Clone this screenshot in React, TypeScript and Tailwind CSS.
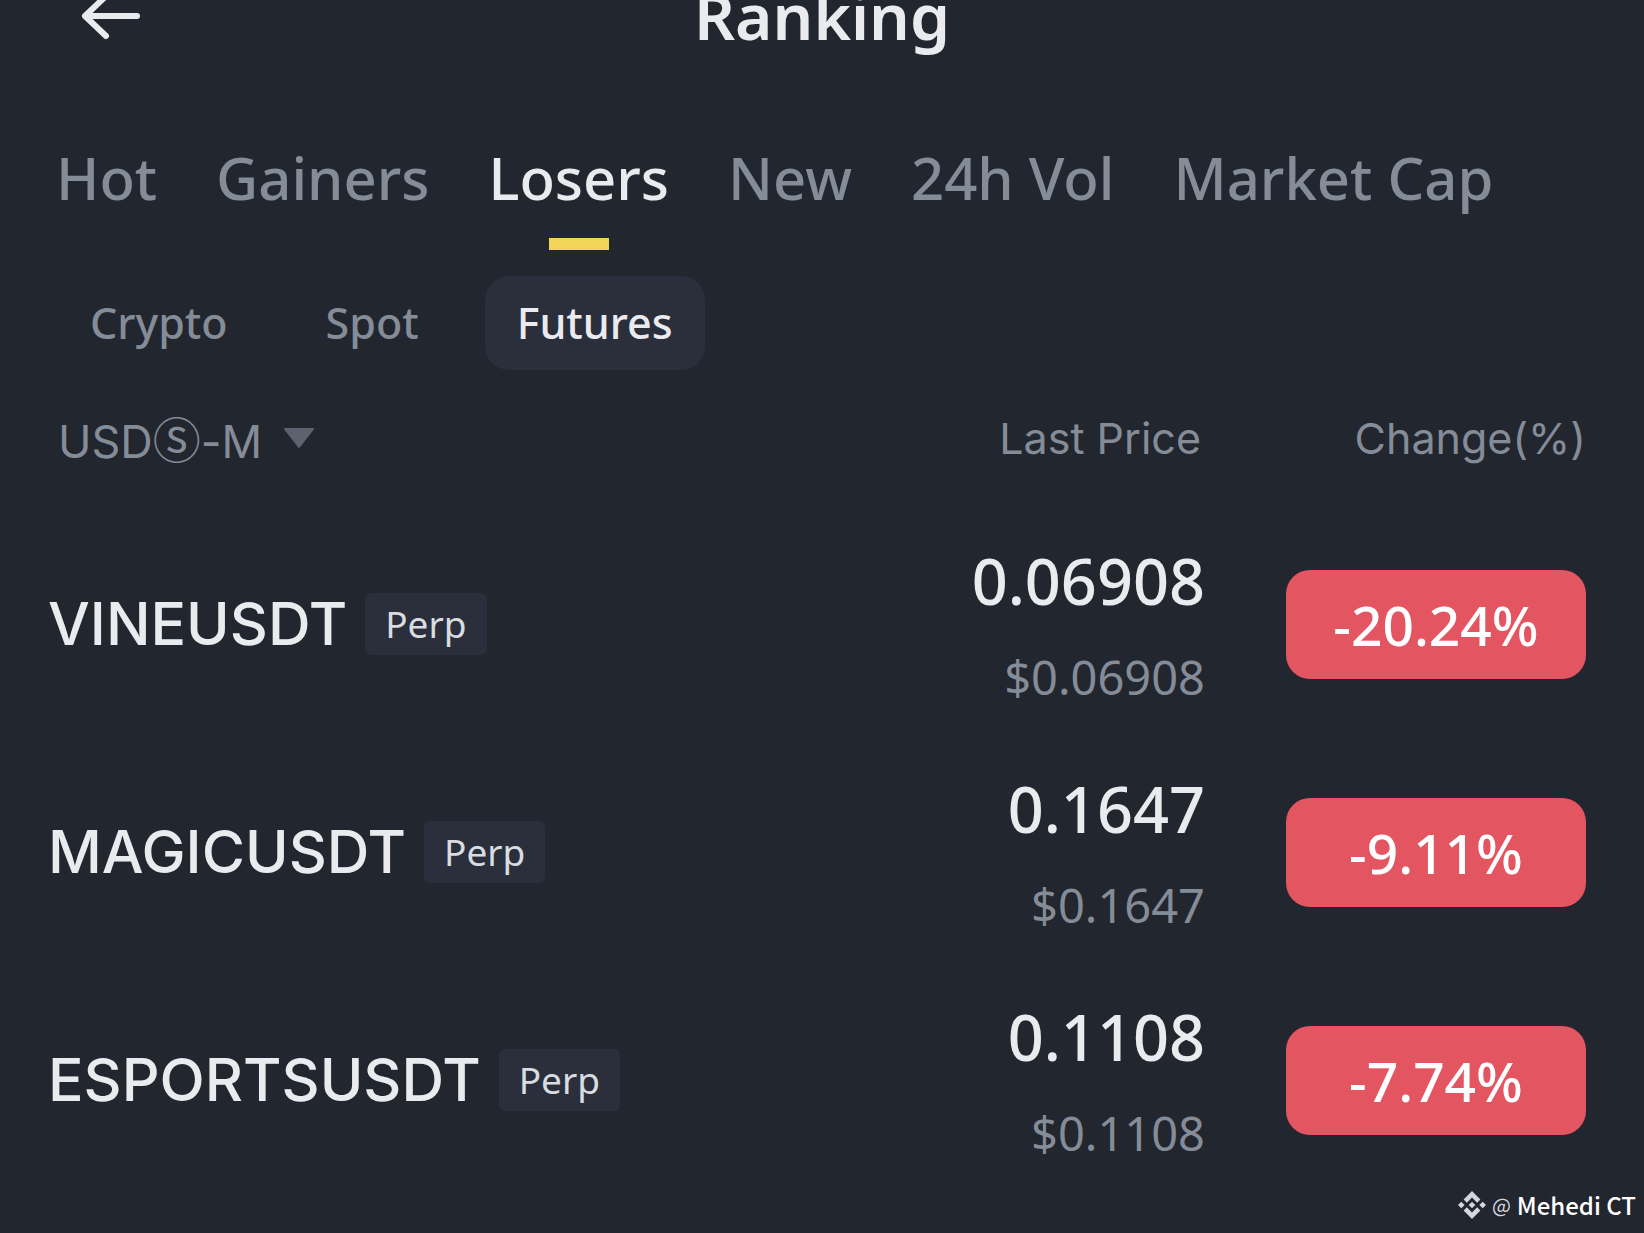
import { useState } from "react";

const tabs = ["Hot", "Gainers", "Losers", "New", "24h Vol", "Market Cap"];
const markets = ["Crypto", "Spot", "Futures"];

type Pair = { symbol: string; price: string; change: string };

const pairs: Pair[] = [
  { symbol: "VINEUSDT", price: "0.06908", change: "-20.24%" },
  { symbol: "MAGICUSDT", price: "0.1647", change: "-9.11%" },
  { symbol: "ESPORTSUSDT", price: "0.1108", change: "-7.74%" },
];

function BackArrow() {
  return (
    <svg viewBox="0 0 60 48" className="h-12 w-15" fill="none" stroke="currentColor" strokeWidth="6" strokeLinecap="round" strokeLinejoin="round" aria-hidden="true">
      <path d="M57 24H5M26 4L5 24l21 20" />
    </svg>
  );
}

function Caret() {
  return (
    <svg viewBox="0 0 30 20" className="h-5 w-[30px] text-[#5d636e]" fill="currentColor" stroke="currentColor" strokeWidth="2" strokeLinejoin="round" aria-hidden="true">
      <path d="M1 1h28L15 19z" />
    </svg>
  );
}

function Diamonds() {
  return (
    <svg viewBox="0 0 28 28" className="size-7 text-[#d5d7dc]" fill="currentColor" aria-hidden="true">
      <path d="M14 0l8.400 8.400-3.300 3.300L14 6.600l-5.100 5.100-3.300-3.300z" />
      <path d="M14 28l8.400-8.400-3.300-3.300L14 21.400l-5.100-5.100-3.300 3.300z" />
      <path d="M14 10.700l3.300 3.300-3.300 3.300-3.300-3.300z" />
      <path d="M3.300 10.700L6.600 14l-3.300 3.300L0 14z" />
      <path d="M24.700 10.700L28 14l-3.300 3.300-3.300-3.300z" />
    </svg>
  );
}

function PairRow({ symbol, price, change }: Pair) {
  return (
    <tr className="h-[228px]">
      <td className="align-middle">
        <div className="flex items-center gap-[18px]">
          <span className="text-[59px] leading-16 font-medium text-[#eaebef]">{symbol}</span>
          <span className="rounded-md bg-[#2a2f3b] px-5 font-['Noto_Sans',sans-serif] text-[37px] leading-[62px] text-[#d9dce1]">Perp</span>
        </div>
      </td>
      <td className="pt-[39px] text-right align-top font-['Noto_Sans',sans-serif]">
        <div className="text-[63px] leading-16 font-medium text-[#eaebef]">{price}</div>
        <div className="mt-9 text-[47px] leading-14">${price}</div>
      </td>
      <td className="align-middle">
        <div className="ml-auto w-[300px] rounded-3xl bg-[#e35561] text-center font-['Noto_Sans',sans-serif] text-[55px] leading-[109px] font-medium text-white">
          {change}
        </div>
      </td>
    </tr>
  );
}

export default function App() {
  const [tab, setTab] = useState("Losers");
  const [market, setMarket] = useState("Futures");

  return (
    <div className="relative min-h-screen overflow-hidden bg-[#22262f] font-['Inter','Noto_Sans_CJK_SC',sans-serif] text-[#848c97]">
      <header className="grid h-8 grid-cols-[1fr_auto_1fr] grid-rows-[32px] items-center px-20 text-[#eaebef]">
        <button type="button" aria-label="Back" className="justify-self-start">
          <BackArrow />
        </button>
        <h1 className="font-['Noto_Sans',sans-serif] text-[64px] leading-8 font-semibold">Ranking</h1>
      </header>

      <nav aria-label="Ranking lists" className="mt-[114px] flex gap-[59px] pl-14 font-['Noto_Sans',sans-serif] text-[58px] font-medium">
        {tabs.map((name) => (
          <button key={name} type="button" onClick={() => setTab(name)} className="flex flex-col items-center gap-7 whitespace-nowrap">
            <span className={name === tab ? "leading-16 text-[#eaebef]" : "leading-16"}>{name}</span>
            {name === tab && <span className="h-3 w-15 bg-[#f3d45b]" />}
          </button>
        ))}
      </nav>

      <div className="mt-[26px] flex gap-[34px] pl-[58px] font-['Noto_Sans',sans-serif] text-[43px] font-medium">
        {markets.map((name) => (
          <button
            key={name}
            type="button"
            aria-pressed={name === market}
            onClick={() => setMarket(name)}
            className={name === market ? "rounded-3xl bg-[#2a2f3b] px-8 leading-[94px] text-[#eaebef]" : "rounded-3xl px-8 leading-[94px]"}
          >
            {name}
          </button>
        ))}
      </div>

      <div className="pr-[58px] pl-12">
        <table className="w-full">
          <thead>
            <tr className="text-[43px] leading-12">
              <th className="pt-11 pb-12 pl-[10px] text-left font-normal">
                <button type="button" aria-haspopup="listbox" className="flex h-12 items-center gap-[22px] text-[45px]">
                  <span className="leading-11 [font-feature-settings:'calt'_0]">
                    USD<span className="font-['Noto_Sans_CJK_SC',sans-serif] text-[48px] leading-none">Ⓢ</span>-M
                  </span>
                  <Caret />
                </button>
              </th>
              <th className="w-[300px] pt-11 pr-1 pb-12 text-right font-normal">Last Price</th>
              <th className="w-[381px] pt-11 pb-12 text-right font-normal">Change(%)</th>
            </tr>
          </thead>
          <tbody>
            {pairs.map((pair) => (
              <PairRow key={pair.symbol} {...pair} />
            ))}
          </tbody>
        </table>
      </div>

      <div className="absolute right-2 bottom-1 flex items-center gap-1.5 font-['Noto_Sans_CJK_SC',sans-serif] text-[24px] leading-12 text-white">
        <Diamonds />
        <span className="text-[20px] text-[#d5d7dc]">@</span>
        <span className="font-medium">Mehedi CT</span>
      </div>
    </div>
  );
}
